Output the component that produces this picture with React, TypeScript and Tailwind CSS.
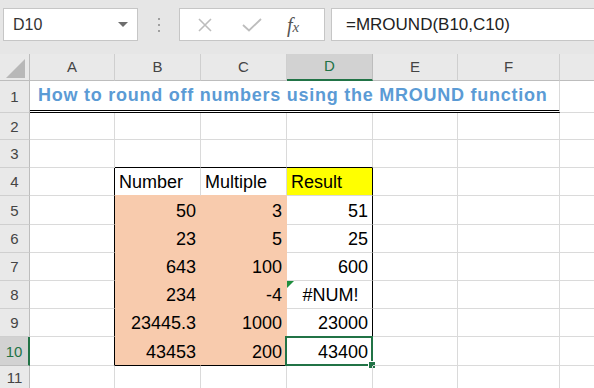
import React from "react";

const cols = [
  { key: "A", w: "w-[85px]" },
  { key: "B", w: "w-[86px]" },
  { key: "C", w: "w-[86px]" },
  { key: "D", w: "w-[86px]" },
  { key: "E", w: "w-[85px]" },
  { key: "F", w: "w-[102px]" },
];

const rowHeights: Record<number, string> = {
  1: "h-[32px]",
  2: "h-[27px]",
  3: "h-[28px]",
  4: "h-[28px]",
  5: "h-[29px]",
  6: "h-[28px]",
  7: "h-[28px]",
  8: "h-[28px]",
  9: "h-[28px]",
  10: "h-[29px]",
  11: "h-[24px]",
};

const data = [
  { row: 5, num: "50", mult: "3", res: "51" },
  { row: 6, num: "23", mult: "5", res: "25" },
  { row: 7, num: "643", mult: "100", res: "600" },
  { row: 8, num: "234", mult: "-4", res: "#NUM!" },
  { row: 9, num: "23445.3", mult: "1000", res: "23000" },
  { row: 10, num: "43453", mult: "200", res: "43400" },
];

function RowHead({ n }: { n: number }) {
  const selected = n === 10;
  return (
    <div
      className={
        "w-[30px] shrink-0 flex items-center justify-center pt-[2px] text-[15px] border-b " +
        (selected
          ? "bg-[#d2d2d2] text-[#217346] border-r-2 border-r-[#217346] border-b-[#bdbdbd]"
          : "bg-[#e9e9e9] text-[#444] border-r border-r-[#bdbdbd] border-b-[#cfcfcf]")
      }
    >
      {n}
    </div>
  );
}

function Cell({
  w,
  className = "",
  children,
}: {
  w: string;
  className?: string;
  children?: React.ReactNode;
}) {
  return (
    <div
      className={
        w +
        " shrink-0 relative flex items-center pt-[2px] text-[18px] text-black border-r border-b " +
        (className.includes("border-r-") ? "" : "border-r-[#dadada] ") +
        (className.includes("border-b-") ? "" : "border-b-[#dadada] ") +
        className
      }
    >
      {children}
    </div>
  );
}

function Row({ n, children }: { n: number; children: React.ReactNode }) {
  return (
    <div className={"flex " + rowHeights[n]}>
      <RowHead n={n} />
      {children}
      <div className="flex-1 border-b border-b-[#dadada]" />
    </div>
  );
}

function EmptyRow({ n, blackBottom }: { n: number; blackBottom?: boolean }) {
  return (
    <Row n={n}>
      {cols.map((c) => (
        <Cell
          key={c.key}
          w={c.w}
          className={
            blackBottom && ["B", "C", "D"].includes(c.key)
              ? "border-b-black"
              : ""
          }
        />
      ))}
    </Row>
  );
}

export default function App() {
  return (
    <div className="w-[594px] h-[388px] overflow-hidden bg-[#e6e6e6] font-['Liberation_Sans',Arial,sans-serif] select-none">
      {/* formula bar */}
      <div className="flex h-[54px] pt-[8px]">
        <div className="ml-[3px] w-[135px] h-[33px] bg-white border border-[#c6c6c6] flex items-center justify-between pl-[9px] pr-[9px]">
          <span className="text-[16px] text-[#333]">D10</span>
          <svg width="10" height="6" viewBox="0 0 10 6">
            <polygon points="0,0 10,0 5,5" fill="#6d6d6d" />
          </svg>
        </div>
        <div className="w-[41px] h-[33px] flex flex-col items-center justify-center gap-[4px]">
          <span className="w-[2px] h-[2px] bg-[#a0a0a0]" />
          <span className="w-[2px] h-[2px] bg-[#a0a0a0]" />
          <span className="w-[2px] h-[2px] bg-[#a0a0a0]" />
        </div>
        <div className="w-[146px] h-[33px] bg-white border border-[#c6c6c6] flex items-center">
          <svg className="ml-[17px]" width="16" height="16" viewBox="0 0 16 16">
            <path d="M2 2 L14 14 M14 2 L2 14" stroke="#bdbdbd" strokeWidth="1.6" />
          </svg>
          <svg className="ml-[29px]" width="20" height="14" viewBox="0 0 20 14">
            <path d="M1 7 L7 12.5 L19 1" stroke="#bdbdbd" strokeWidth="1.8" fill="none" />
          </svg>
          <span className="ml-[25px] font-['Liberation_Serif',serif] italic text-[#555] leading-none">
            <span className="text-[20px]">f</span>
            <span className="text-[15px]">x</span>
          </span>
        </div>
        <div className="ml-[6px] flex-1 h-[33px] bg-white border border-r-0 border-[#c6c6c6] flex items-center pl-[14px]">
          <span className="text-[17px] text-[#222]">=MROUND(B10,C10)</span>
        </div>
      </div>

      {/* column headers */}
      <div className="flex h-[27px] text-[15px] text-[#444]">
        <div className="w-[30px] shrink-0 bg-[#e9e9e9] border-r border-b border-[#bdbdbd] relative">
          <svg className="absolute left-[6px] top-[5px]" width="19" height="19" viewBox="0 0 19 19">
            <polygon points="19,0 19,19 0,19" fill="#b8b8b8" />
          </svg>
        </div>
        {cols.map((c) => (
          <div
            key={c.key}
            className={
              c.w +
              " shrink-0 flex items-center justify-center " +
              (c.key === "D"
                ? "bg-[#d2d2d2] text-[#217346] border-r border-r-[#bdbdbd] border-b-2 border-b-[#217346]"
                : "bg-[#e9e9e9] border-r border-r-[#cfcfcf] border-b border-b-[#bdbdbd]")
            }
          >
            {c.key}
          </div>
        ))}
        <div className="flex-1 bg-[#e9e9e9] border-b border-[#bdbdbd]" />
      </div>

      {/* sheet */}
      <div className="bg-white">
        <Row n={1}>
          <div className="w-[530px] shrink-0 flex items-center pl-[8px] pb-[1px] border-r border-r-[#dadada] border-b-[3px] border-double border-b-black">
            <span className="text-[18px] font-bold tracking-[0.75px] text-[#5b9bd5] whitespace-nowrap">
              How to round off numbers using the MROUND function
            </span>
          </div>
        </Row>
        <EmptyRow n={2} />
        <EmptyRow n={3} blackBottom />
        <Row n={4}>
          <Cell w="w-[85px]" className="border-r-black" />
          <Cell w="w-[86px]" className="pl-[4px] border-b-[#f8cbad]">
            Number
          </Cell>
          <Cell w="w-[86px]" className="pl-[4px] border-b-[#f8cbad]">
            Multiple
          </Cell>
          <Cell w="w-[86px]" className="pl-[4px] bg-[#ffff00] border-r-black">
            Result
          </Cell>
          <Cell w="w-[85px]" />
          <Cell w="w-[102px]" />
        </Row>
        {data.map((d) => {
          const last = d.row === 10;
          return (
            <Row key={d.row} n={d.row}>
              <Cell w="w-[85px]" className="border-r-black" />
              <Cell
                w="w-[86px]"
                className={
                  "justify-end pr-[4px] bg-[#f8cbad] border-r-[#f8cbad] " +
                  (last ? "border-b-black" : "border-b-[#f8cbad]")
                }
              >
                {d.num}
              </Cell>
              <Cell
                w="w-[86px]"
                className={
                  "justify-end pr-[4px] bg-[#f8cbad] border-r-[#f8cbad] " +
                  (last ? "border-b-black" : "border-b-[#f8cbad]")
                }
              >
                {d.mult}
              </Cell>
              <Cell
                w="w-[86px]"
                className={
                  "border-r-black " +
                  (last ? "border-b-black " : "") +
                  (d.res.startsWith("#") ? "justify-center pl-[2px]" : "justify-end pr-[4px]")
                }
              >
                {d.res.startsWith("#") && (
                  <svg className="absolute left-0 top-0" width="7" height="7" viewBox="0 0 7 7">
                    <polygon points="0,0 7,0 0,7" fill="#1e8e3e" />
                  </svg>
                )}
                {d.res}
                {last && (
                  <div className="absolute -left-[2px] -top-[1px] -right-[1px] -bottom-[1px] border-2 border-[#217346]">
                    <div className="absolute -right-[5px] -bottom-[5px] w-[8px] h-[8px] bg-[#217346] border border-white" />
                  </div>
                )}
              </Cell>
              <Cell w="w-[85px]" />
              <Cell w="w-[102px]" />
            </Row>
          );
        })}
        <EmptyRow n={11} />
      </div>
    </div>
  );
}
